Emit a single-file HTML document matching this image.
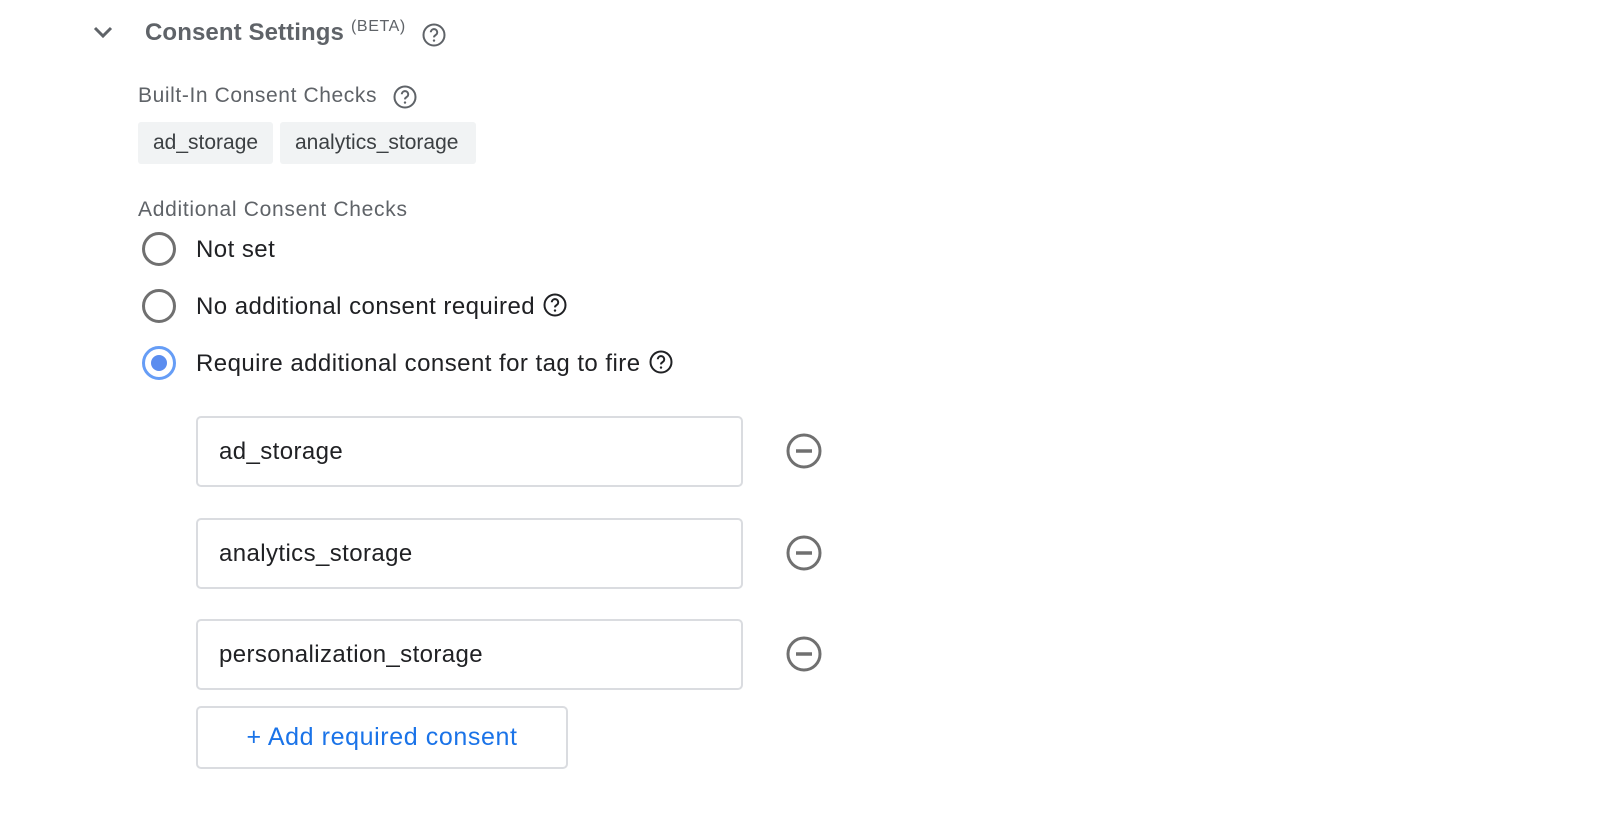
<!DOCTYPE html>
<html><head><style>
body{margin:0;width:1600px;height:829px;background:#fff;font-family:"Liberation Sans",sans-serif;position:relative;overflow:hidden}
.a{position:absolute;white-space:nowrap}
.chip{position:absolute;top:122px;height:42px;background:#f1f3f4;border-radius:3px;font-size:21px;line-height:42px;color:#3c4043;padding:0 15px;box-sizing:border-box}
.radio{position:absolute;left:142px;width:34px;height:34px;border:3px solid #707070;border-radius:50%;box-sizing:border-box}
.rl{position:absolute;left:196px;font-size:24px;color:#202124;line-height:30px;letter-spacing:0.45px;white-space:nowrap}
.rl svg{vertical-align:-3px;margin-left:8px}
.inp{position:absolute;left:196px;width:547px;height:71px;border:2px solid #dadce0;border-radius:5px;box-sizing:border-box;font-size:24px;color:#202124;padding-left:21px;line-height:67px;letter-spacing:0.4px}
</style></head><body>
<svg class="a" style="left:92px;top:24px" width="22" height="16" viewBox="0 0 22 16"><path d="M3 4l8 8 8-8" fill="none" stroke="#5f6368" stroke-width="3"/></svg>
<div class="a" style="left:145px;top:19px;font-size:24px;font-weight:bold;color:#5f6368;letter-spacing:0.1px">Consent Settings</div>
<div class="a" style="left:351px;top:18px;font-size:16px;color:#5f6368;letter-spacing:0.6px">(BETA)</div>
<svg class="a" style="left:422px;top:23px" width="24" height="24" viewBox="0 0 24 24"><circle cx="12" cy="12" r="10.5" fill="none" stroke="#5f6368" stroke-width="2"/><path d="M8.8 9.3a3.2 3.2 0 1 1 4.6 2.9c-.9.5-1.4 1-1.4 2.2" fill="none" stroke="#5f6368" stroke-width="2"/><circle cx="12" cy="17.6" r="1.2" fill="#5f6368"/></svg>
<div class="a" style="left:138px;top:84px;font-size:21px;color:#5f6368;letter-spacing:0.6px">Built-In Consent Checks</div>
<svg class="a" style="left:393px;top:85px" width="24" height="24" viewBox="0 0 24 24"><circle cx="12" cy="12" r="10.5" fill="none" stroke="#5f6368" stroke-width="2"/><path d="M8.8 9.3a3.2 3.2 0 1 1 4.6 2.9c-.9.5-1.4 1-1.4 2.2" fill="none" stroke="#5f6368" stroke-width="2"/><circle cx="12" cy="17.6" r="1.2" fill="#5f6368"/></svg>
<div class="chip" style="left:138px;width:135px">ad_storage</div>
<div class="chip" style="left:280px;width:196px">analytics_storage</div>
<div class="a" style="left:138px;top:198px;font-size:21px;color:#5f6368;letter-spacing:0.7px">Additional Consent Checks</div>
<div class="radio" style="top:232px"></div><div class="rl" style="top:235px">Not set</div>
<div class="radio" style="top:289px"></div><div class="rl" style="top:292px">No additional consent required<svg width="24" height="24" viewBox="0 0 24 24"><circle cx="12" cy="12" r="10.5" fill="none" stroke="#202124" stroke-width="2"/><path d="M8.8 9.3a3.2 3.2 0 1 1 4.6 2.9c-.9.5-1.4 1-1.4 2.2" fill="none" stroke="#202124" stroke-width="2"/><circle cx="12" cy="17.6" r="1.2" fill="#202124"/></svg></div>
<div class="radio" style="top:346px;border-color:#669df6"><div style="position:absolute;left:6px;top:6px;width:16px;height:16px;border-radius:50%;background:#5b8def"></div></div>
<div class="rl" style="top:349px">Require additional consent for tag to fire<svg width="24" height="24" viewBox="0 0 24 24"><circle cx="12" cy="12" r="10.5" fill="none" stroke="#202124" stroke-width="2"/><path d="M8.8 9.3a3.2 3.2 0 1 1 4.6 2.9c-.9.5-1.4 1-1.4 2.2" fill="none" stroke="#202124" stroke-width="2"/><circle cx="12" cy="17.6" r="1.2" fill="#202124"/></svg></div>
<div class="inp" style="top:416px">ad_storage</div>
<div class="inp" style="top:518px">analytics_storage</div>
<div class="inp" style="top:619px">personalization_storage</div>
<svg class="a" style="left:786px;top:433px" width="36" height="36" viewBox="0 0 36 36"><circle cx="18" cy="18" r="16" fill="none" stroke="#707070" stroke-width="3"/><path d="M10 18h16" stroke="#707070" stroke-width="3.5"/></svg>
<svg class="a" style="left:786px;top:535px" width="36" height="36" viewBox="0 0 36 36"><circle cx="18" cy="18" r="16" fill="none" stroke="#707070" stroke-width="3"/><path d="M10 18h16" stroke="#707070" stroke-width="3.5"/></svg>
<svg class="a" style="left:786px;top:636px" width="36" height="36" viewBox="0 0 36 36"><circle cx="18" cy="18" r="16" fill="none" stroke="#707070" stroke-width="3"/><path d="M10 18h16" stroke="#707070" stroke-width="3.5"/></svg>
<div class="a" style="left:196px;top:706px;width:372px;height:63px;border:2px solid #dadce0;border-radius:5px;box-sizing:border-box;text-align:center;line-height:59px;font-size:25px;color:#1a73e8;letter-spacing:0.6px">+ Add required consent</div>
</body></html>
